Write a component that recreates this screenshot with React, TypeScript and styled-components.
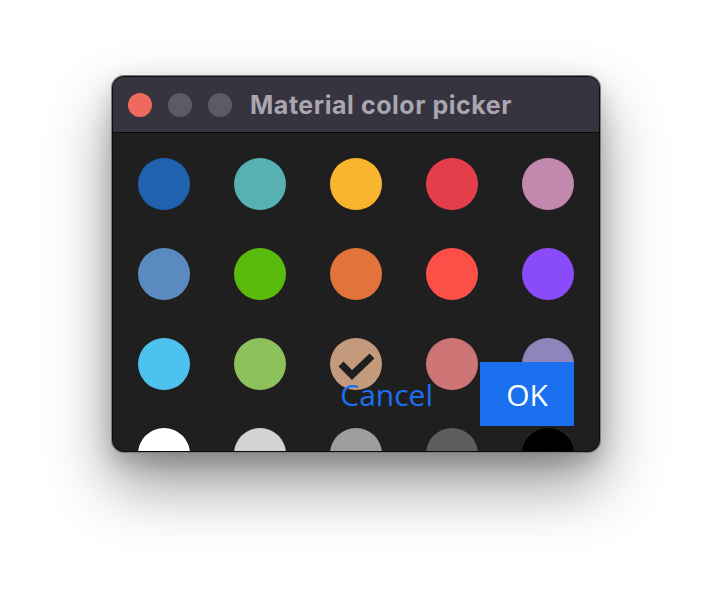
import React, { useState } from 'react';
import styled, { createGlobalStyle } from 'styled-components';

const GlobalStyle = createGlobalStyle`
    html, body {
        margin: 0;
        padding: 0;
        background: #ffffff;
    }
    body {
        font-family: 'Open Sans', 'Noto Sans', sans-serif;
    }
`;

const Page = styled.div`
    width: 712px;
    height: 600px;
    display: flex;
    justify-content: center;
    align-items: flex-start;
    padding-top: 76px;
    box-sizing: border-box;
`;

const Window = styled.div`
    width: 488px;
    height: 376px;
    box-sizing: border-box;
    border-radius: 12px;
    border: 1px solid #0c0c0c;
    box-shadow: 0 0 0 1px #7c7c7c, 0 32px 64px rgba(0, 0, 0, 0.42),
        0 10px 24px rgba(0, 0, 0, 0.2);
    overflow: hidden;
    display: flex;
    flex-direction: column;
    background: #1f1f1f;
`;

const TitleBar = styled.div`
    height: 55px;
    flex: 0 0 auto;
    background: #37343f;
    border-bottom: 1px solid #0a0a0a;
    display: flex;
    align-items: center;
    padding-left: 15px;
    gap: 16px;
`;

const Lights = styled.div`
    display: flex;
    gap: 16px;
`;

const Light = styled.span<{ $color: string }>`
    width: 24px;
    height: 24px;
    border-radius: 50%;
    background: ${(p) => p.$color};
`;

const Title = styled.div`
    font-family: Inter, 'Noto Sans', sans-serif;
    font-weight: 700;
    font-size: 25px;
    letter-spacing: 0.55px;
    color: #a9a6b1;
    margin-left: 2px;
`;

const Content = styled.div`
    position: relative;
    flex: 1;
    overflow: hidden;
`;

const Grid = styled.div`
    display: grid;
    grid-template-columns: repeat(5, 52px);
    column-gap: 44px;
    row-gap: 38px;
    padding: 25px 0 0 25px;
`;

const Swatch = styled.button<{ $color: string }>`
    width: 52px;
    height: 52px;
    border-radius: 50%;
    border: none;
    padding: 0;
    background: ${(p) => p.$color};
    display: flex;
    align-items: center;
    justify-content: center;
    cursor: pointer;
`;

const Actions = styled.div`
    position: absolute;
    top: 229px;
    right: 25px;
    display: flex;
    align-items: center;
    gap: 47px;
`;

const TextButton = styled.button`
    font-family: 'Open Sans', 'Noto Sans', sans-serif;
    font-size: 30px;
    color: #1b6ff0;
    background: transparent;
    border: none;
    padding: 0;
    height: 64px;
    cursor: pointer;
`;

const PrimaryButton = styled.button`
    font-family: 'Open Sans', 'Noto Sans', sans-serif;
    font-size: 30px;
    color: #ffffff;
    background: #1a70ef;
    border: none;
    width: 94px;
    height: 64px;
    padding: 0;
    cursor: pointer;
`;

const colors = [
    '#2162b0', '#57b1b3', '#fab52e', '#e43e4b', '#c388ae',
    '#5b8ac1', '#5abb0d', '#e2743b', '#fb4f47', '#8a4cfb',
    '#4ec2ef', '#8dc15b', '#c49a7d', '#cd7574', '#8e85bd',
    '#ffffff', '#d3d3d3', '#9e9e9e', '#5d5d5d', '#000000',
];

function Check() {
    return (
        <svg width="52" height="52" viewBox="0 0 52 52">
            <polyline
                points="11,26 22,37 42,18"
                fill="none"
                stroke="#1f1f1f"
                strokeWidth="7"
            />
        </svg>
    );
}

export default function App() {
    const [selected, setSelected] = useState(12);
    return (
        <Page>
            <GlobalStyle />
            <Window>
                <TitleBar>
                    <Lights>
                        <Light $color="#ee6a5f" />
                        <Light $color="#5d5a63" />
                        <Light $color="#5d5a63" />
                    </Lights>
                    <Title>Material color picker</Title>
                </TitleBar>
                <Content>
                    <Grid>
                        {colors.map((c, i) => (
                            <Swatch
                                key={i}
                                $color={c}
                                onClick={() => setSelected(i)}
                            >
                                {selected === i && <Check />}
                            </Swatch>
                        ))}
                    </Grid>
                    <Actions>
                        <TextButton>Cancel</TextButton>
                        <PrimaryButton>OK</PrimaryButton>
                    </Actions>
                </Content>
            </Window>
        </Page>
    );
}
